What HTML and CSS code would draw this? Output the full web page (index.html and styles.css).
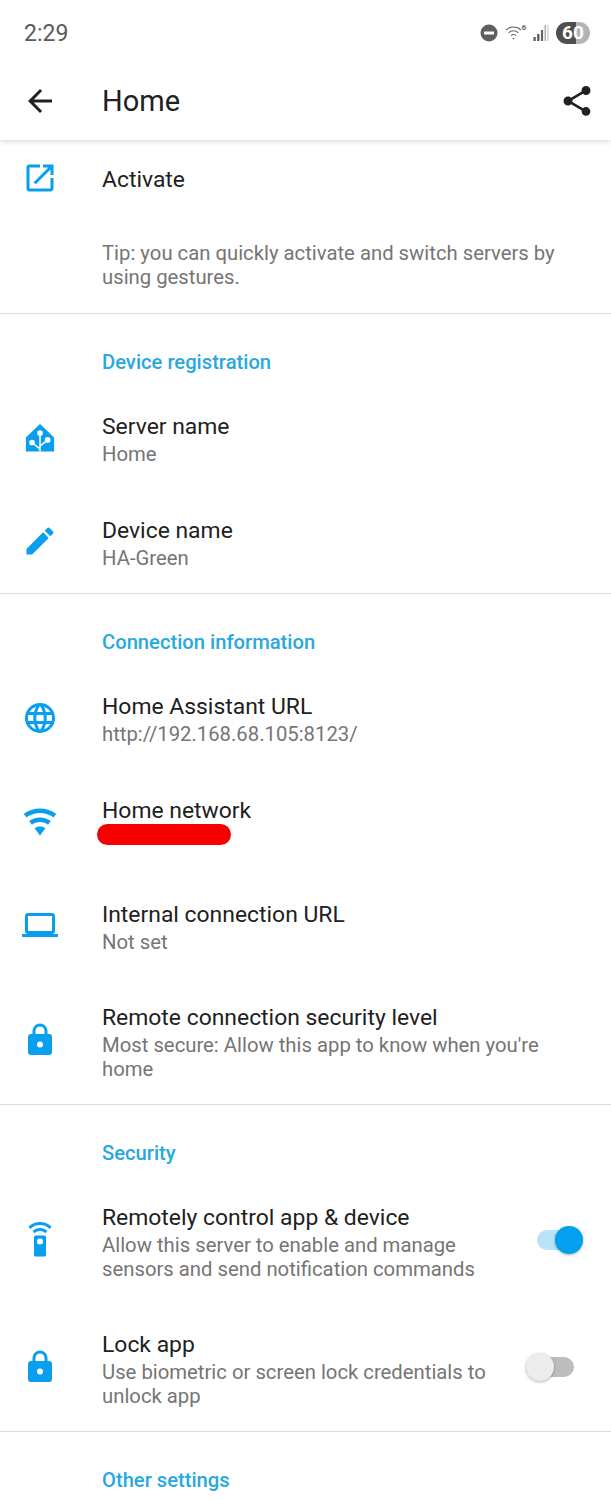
FILE: index.html
```html
<!DOCTYPE html>
<html lang="en">
  <head>
    <meta charset="UTF-8" />
    <meta name="viewport" content="width=device-width, initial-scale=1.0" />
    <title>Home - Settings</title>
    <link rel="stylesheet" href="styles.css">
  </head>
  <body>
    <div class="app-header">
      <div class="status-bar">
        <div class="status-time">2:29</div>
        <div class="status-icons">
          <svg class="dnd-icon" viewBox="0 0 18 18">
            <circle cx="9" cy="9" r="8.5" fill="#5f5f5f" />
            <rect x="4" y="7.6" width="10" height="2.8" rx="0.6" fill="#fff" />
          </svg>
          <div class="wifi-status">
            <svg class="wifi-status-icon" viewBox="0 0 24 24" fill="none" stroke="#666" stroke-width="1.5">
              <path d="M1.5 8.5a15 15 0 0 1 21 0" />
              <path d="M5 12.5a10 10 0 0 1 14 0" />
              <path d="M8.5 16.5a5 5 0 0 1 7 0" />
              <circle cx="12" cy="20.5" r="1.2" fill="#666" stroke="none" />
            </svg>
            <span class="wifi-six">6</span>
          </div>
          <svg class="signal-icon" viewBox="0 0 16 18">
            <rect x="0.5" y="13" width="2.2" height="4" fill="#555" />
            <rect x="4.2" y="10" width="2.2" height="7" fill="#555" />
            <rect x="7.9" y="6" width="2.2" height="11" fill="#666" />
            <rect x="11.6" y="1" width="1.2" height="16" fill="#999" />
            <rect x="14.4" y="1" width="1" height="16" fill="#bbb" />
          </svg>
          <div class="battery">60</div>
        </div>
      </div>
      <div class="toolbar">
        <svg class="icon toolbar-icon" viewBox="0 0 24 24">
          <path d="M20 11H7.83l5.59-5.59L12 4l-8 8 8 8 1.41-1.41L7.83 13H20v-2z" />
        </svg>
        <div class="toolbar-title">Home</div>
        <svg class="icon toolbar-icon" viewBox="0 0 24 24">
          <path d="M18,16.08C17.24,16.08 16.56,16.38 16.04,16.85L8.91,12.7C8.96,12.47 9,12.24 9,12C9,11.76 8.96,11.53 8.91,11.3L15.96,7.19C16.5,7.69 17.21,8 18,8A3,3 0 0,0 21,5A3,3 0 0,0 18,2A3,3 0 0,0 15,5C15,5.24 15.04,5.47 15.09,5.7L8.04,9.81C7.5,9.31 6.79,9 6,9A3,3 0 0,0 3,12A3,3 0 0,0 6,15C6.79,15 7.5,14.69 8.04,14.19L15.16,18.34C15.11,18.55 15.08,18.77 15.08,19C15.08,20.61 16.39,21.91 18,21.91C19.61,21.91 20.92,20.61 20.92,19A2.92,2.92 0 0,0 18,16.08Z" />
        </svg>
      </div>
    </div>

    <div class="section">
      <div class="row row-activate">
        <svg class="icon" viewBox="0 0 24 24">
          <path d="M19 19H5V5h7V3H5a2 2 0 0 0-2 2v14a2 2 0 0 0 2 2h14c1.1 0 2-.9 2-2v-7h-2v7zM14 3v2h3.59l-9.83 9.83 1.41 1.41L19 6.41V10h2V3h-7z" />
        </svg>
        <div class="row-text">
          <div class="row-title">Activate</div>
        </div>
      </div>
      <div class="tip">Tip: you can quickly activate and switch servers by using gestures.</div>
    </div>

    <div class="section">
      <div class="section-title">Device registration</div>
      <div class="row">
        <svg class="icon" viewBox="0 0 24 24">
          <path d="M12 2.7L21.4 11.6V21H2.6V11.6Z" />
          <g class="ha-tree">
            <path d="M12 8.7V21M6.7 15L12 19.4M17.1 13.3L12 17.4" />
            <circle cx="12" cy="8.7" r="1.4" />
            <circle cx="6.7" cy="15" r="1.4" />
            <circle cx="17.1" cy="13.3" r="1.4" />
          </g>
        </svg>
        <div class="row-text">
          <div class="row-title">Server name</div>
          <div class="row-summary">Home</div>
        </div>
      </div>
      <div class="row">
        <svg class="icon" viewBox="0 0 24 24">
          <path d="M3 17.25V21h3.75L17.81 9.94l-3.75-3.75L3 17.25zM20.71 7.04a1 1 0 0 0 0-1.41l-2.34-2.34a1 1 0 0 0-1.41 0l-1.83 1.83 3.75 3.75 1.83-1.83z" />
        </svg>
        <div class="row-text">
          <div class="row-title">Device name</div>
          <div class="row-summary">HA-Green</div>
        </div>
      </div>
    </div>

    <div class="section">
      <div class="section-title">Connection information</div>
      <div class="row">
        <svg class="icon" viewBox="0 0 24 24">
          <path d="M16.36,14C16.44,13.34 16.5,12.68 16.5,12C16.5,11.32 16.44,10.66 16.36,10H19.74C19.9,10.64 20,11.31 20,12C20,12.69 19.9,13.36 19.74,14M14.59,19.56C15.19,18.45 15.65,17.25 15.97,16H18.92C17.96,17.65 16.43,18.93 14.59,19.56M14.34,14H9.66C9.56,13.34 9.5,12.68 9.5,12C9.5,11.32 9.56,10.65 9.66,10H14.34C14.43,10.65 14.5,11.32 14.5,12C14.5,12.68 14.43,13.34 14.34,14M12,19.96C11.17,18.76 10.5,17.43 10.09,16H13.91C13.5,17.43 12.83,18.76 12,19.96M8,8H5.08C6.03,6.34 7.57,5.06 9.4,4.44C8.8,5.55 8.35,6.75 8,8M5.08,16H8C8.35,17.25 8.8,18.45 9.4,19.56C7.57,18.93 6.03,17.65 5.08,16M4.26,14C4.1,13.36 4,12.69 4,12C4,11.31 4.1,10.64 4.26,10H7.64C7.56,10.66 7.5,11.32 7.5,12C7.5,12.68 7.56,13.34 7.64,14M12,4.03C12.83,5.23 13.5,6.57 13.91,8H10.09C10.5,6.57 11.17,5.23 12,4.03M18.92,8H15.97C15.65,6.75 15.19,5.55 14.59,4.44C16.43,5.07 17.96,6.34 18.92,8M12,2C6.47,2 2,6.5 2,12A10,10 0 0,0 12,22A10,10 0 0,0 22,12A10,10 0 0,0 12,2Z" />
        </svg>
        <div class="row-text">
          <div class="row-title">Home Assistant URL</div>
          <div class="row-summary">http://192.168.68.105:8123/</div>
        </div>
      </div>
      <div class="row">
        <svg class="icon" viewBox="0 0 24 24">
          <path d="M12,21L15.6,16.2C14.6,15.45 13.35,15 12,15C10.65,15 9.4,15.45 8.4,16.2L12,21M12,3C7.95,3 4.21,4.34 1.2,6.6L3,9C5.5,7.12 8.62,6 12,6C15.38,6 18.5,7.12 21,9L22.8,6.6C19.79,4.34 16.05,3 12,3M12,9C9.3,9 6.81,9.89 4.8,11.4L6.6,13.8C8.1,12.67 9.97,12 12,12C14.03,12 15.9,12.67 17.4,13.8L19.2,11.4C17.19,9.89 14.7,9 12,9Z" />
        </svg>
        <div class="row-text">
          <div class="row-title">Home network</div>
          <div class="redacted"></div>
        </div>
      </div>
      <div class="row">
        <svg class="icon" viewBox="0 0 24 24">
          <path d="M4,6H20V16H4M20,18A2,2 0 0,0 22,16V6C22,4.89 21.1,4 20,4H4C2.89,4 2,4.89 2,6V16A2,2 0 0,0 4,18H0V20H24V18H20Z" />
        </svg>
        <div class="row-text">
          <div class="row-title">Internal connection URL</div>
          <div class="row-summary">Not set</div>
        </div>
      </div>
      <div class="row">
        <svg class="icon" viewBox="0 0 24 24">
          <path d="M12,17A2,2 0 0,0 14,15C14,13.89 13.1,13 12,13A2,2 0 0,0 10,15A2,2 0 0,0 12,17M18,8A2,2 0 0,1 20,10V20A2,2 0 0,1 18,22H6A2,2 0 0,1 4,20V10C4,8.89 4.9,8 6,8H7V6A5,5 0 0,1 12,1A5,5 0 0,1 17,6V8H18M12,3A3,3 0 0,0 9,6V8H15V6A3,3 0 0,0 12,3Z" />
        </svg>
        <div class="row-text">
          <div class="row-title">Remote connection security level</div>
          <div class="row-summary">Most secure: Allow this app to know when you're home</div>
        </div>
      </div>
    </div>

    <div class="section">
      <div class="section-title">Security</div>
      <div class="row">
        <svg class="icon" viewBox="0 0 24 24">
          <path d="M12,0C8.96,0 6.21,1.23 4.22,3.22L5.63,4.63C7.26,3 9.5,2 12,2C14.5,2 16.74,3 18.36,4.64L19.77,3.23C17.79,1.23 15.04,0 12,0M7.05,6.05L8.46,7.46C9.37,6.56 10.62,6 12,6C13.38,6 14.63,6.56 15.54,7.46L16.95,6.05C15.68,4.78 13.93,4 12,4C10.07,4 8.32,4.78 7.05,6.05M15,9H9A1,1 0 0,0 8,10V22A1,1 0 0,0 9,23H15A1,1 0 0,0 16,22V10A1,1 0 0,0 15,9M12,15A2,2 0 0,1 10,13A2,2 0 0,1 12,11A2,2 0 0,1 14,13A2,2 0 0,1 12,15Z" />
        </svg>
        <div class="row-text">
          <div class="row-title">Remotely control app &amp; device</div>
          <div class="row-summary">Allow this server to enable and manage sensors and send notification commands</div>
        </div>
        <div class="switch on">
          <div class="switch-thumb"></div>
        </div>
      </div>
      <div class="row">
        <svg class="icon" viewBox="0 0 24 24">
          <path d="M12,17A2,2 0 0,0 14,15C14,13.89 13.1,13 12,13A2,2 0 0,0 10,15A2,2 0 0,0 12,17M18,8A2,2 0 0,1 20,10V20A2,2 0 0,1 18,22H6A2,2 0 0,1 4,20V10C4,8.89 4.9,8 6,8H7V6A5,5 0 0,1 12,1A5,5 0 0,1 17,6V8H18M12,3A3,3 0 0,0 9,6V8H15V6A3,3 0 0,0 12,3Z" />
        </svg>
        <div class="row-text">
          <div class="row-title">Lock app</div>
          <div class="row-summary">Use biometric or screen lock credentials to unlock app</div>
        </div>
        <div class="switch off">
          <div class="switch-thumb"></div>
        </div>
      </div>
    </div>

    <div class="section">
      <div class="section-title">Other settings</div>
    </div>
  </body>
</html>
```

FILE: styles.css
```css
* {
  margin: 0;
  padding: 0;
  box-sizing: border-box;
}

body {
  width: 611px;
  height: 1500px;
  overflow: hidden;
  background: #fff;
  font-family: Roboto, "Noto Sans", sans-serif;
  color: #212121;
}

.app-header {
  height: 140px;
  box-shadow: 0 2px 5px rgba(0, 0, 0, 0.14);
  position: relative;
}

.status-bar {
  height: 66px;
  padding: 0 21px 0 24px;
  display: flex;
  align-items: center;
  justify-content: space-between;
}

.status-time {
  font-size: 23px;
  color: #5a5a5a;
}

.status-icons {
  display: flex;
  align-items: center;
}

.dnd-icon {
  width: 18px;
  height: 18px;
  margin-right: 7px;
}

.wifi-status {
  width: 20px;
  height: 18px;
  margin-right: 8px;
  position: relative;
}

.wifi-status-icon {
  width: 17px;
  height: 17px;
  display: block;
}

.wifi-six {
  position: absolute;
  top: -1px;
  right: -1px;
  font-size: 8px;
  font-weight: 700;
  color: #666;
}

.signal-icon {
  width: 16px;
  height: 18px;
  margin-right: 7px;
}

.battery {
  width: 34px;
  height: 22px;
  border-radius: 11px;
  background: linear-gradient(90deg, #4f4f4f 0 59%, #b4b4b4 59% 100%);
  color: #fff;
  font-size: 19px;
  font-weight: 700;
  line-height: 22px;
  text-align: center;
}

.toolbar {
  height: 74px;
  padding: 0 16px 4px 22px;
  display: flex;
  align-items: center;
}

.toolbar-title {
  flex: 1;
  margin-left: 44px;
  font-size: 29px;
  font-weight: 450;
}

.icon {
  width: 36px;
  height: 36px;
  flex-shrink: 0;
  fill: #079fee;
}

.toolbar .toolbar-icon {
  fill: #212121;
}

.ha-tree {
  fill: #fff;
  stroke: #fff;
  stroke-width: 1;
}

.section {
  border-bottom: 1px solid #dcdcdc;
}

.section:last-child {
  border-bottom: none;
}

.section-title {
  padding: 36px 0 12px 102px;
  font-size: 20.2px;
  font-weight: 500;
  line-height: 24px;
  color: #29a8df;
}

.row {
  padding-left: 22px;
  min-height: 103.6px;
  display: flex;
  align-items: center;
}

.row-activate {
  min-height: 76px;
}

.row-text {
  flex: 1;
  margin-left: 44px;
  padding: 27px 28px 23px 0;
}

.row-activate .row-text {
  padding: 4px 28px 0 0;
}

.row-title {
  font-size: 22.9px;
  line-height: 28px;
}

.row-summary {
  margin-top: 1px;
  font-size: 20.3px;
  line-height: 24px;
  color: #757575;
}

.tip {
  padding: 25px 28px 24px 102px;
  font-size: 20.3px;
  line-height: 24px;
  color: #757575;
}

.redacted {
  width: 134px;
  height: 21px;
  margin: -1px 0 5px -5px;
  border-radius: 11px;
  background: #f50000;
}

.switch {
  height: 20px;
  border-radius: 10px;
  flex-shrink: 0;
  position: relative;
}

.switch.on {
  width: 46px;
  margin-right: 28px;
  background: #b8e3f8;
}

.switch.off {
  width: 48px;
  margin-right: 37px;
  background: #bdbdbd;
}

.switch-thumb {
  position: absolute;
  top: -4px;
  width: 28px;
  height: 28px;
  border-radius: 50%;
  box-shadow: 0 1px 3px rgba(0, 0, 0, 0.3);
}

.switch.on .switch-thumb {
  right: 0;
  background: #03a0f0;
}

.switch.off .switch-thumb {
  left: 0;
  background: #ececec;
}
```
